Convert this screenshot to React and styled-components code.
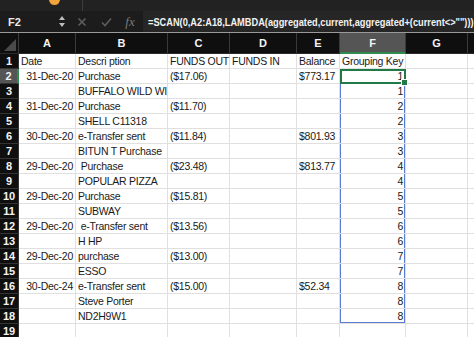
import React from "react";
import styled, { createGlobalStyle } from "styled-components";

const GlobalStyle = createGlobalStyle`
  html, body {
    margin: 0;
    padding: 0;
    background: #1c1c1c;
    overflow: hidden;
  }
`;

const COLS = [57, 92, 62, 67, 43, 66, 62, 40];
const LETTERS = ["A", "B", "C", "D", "E", "F", "G", ""];
const TEMPLATE = `19px ${COLS.map((w) => w + "px").join(" ")}`;

const rows = [
  ["Date", "Descri ption", "FUNDS OUT", "FUNDS IN", "Balance", "Grouping Key", ""],
  ["31-Dec-20", "Purchase", "($17.06)", "", "$773.17", "1"],
  ["", "BUFFALO WILD WI", "", "", "", "1"],
  ["31-Dec-20", "Purchase", "($11.70)", "", "", "2"],
  ["", "SHELL C11318", "", "", "", "2"],
  ["30-Dec-20", "e-Transfer sent", "($11.84)", "", "$801.93", "3"],
  ["", "BITUN T Purchase", "", "", "", "3"],
  ["29-Dec-20", " Purchase", "($23.48)", "", "$813.77", "4"],
  ["", "POPULAR PIZZA", "", "", "", "4"],
  ["29-Dec-20", "Purchase", "($15.81)", "", "", "5"],
  ["", "SUBWAY", "", "", "", "5"],
  ["29-Dec-20", " e-Transfer sent", "($13.56)", "", "", "6"],
  ["", "H HP", "", "", "", "6"],
  ["29-Dec-20", "purchase", "($13.00)", "", "", "7"],
  ["", "ESSO", "", "", "", "7"],
  ["30-Dec-24", "e-Transfer sent", "($15.00)", "", "$52.34", "8"],
  ["", "Steve Porter", "", "", "", "8"],
  ["", "ND2H9W1", "", "", "", "8"],
  ["", "", "", "", "", ""],
];

const Window = styled.div`
  width: 474px;
  height: 337px;
  overflow: hidden;
  background: #ffffff;
  font-family: "Liberation Sans", Arial, sans-serif;
`;

const TitleStrip = styled.div`
  height: 11px;
  background: #222222;
  display: flex;
  align-items: flex-start;
  padding-left: 49px;
  gap: 22px;
`;

const Dot = styled.span`
  width: 11px;
  height: 11px;
  margin-top: -6px;
  border-radius: 50%;
  background: #f0a43a;
`;

const StripDivider = styled.span`
  width: 1px;
  height: 11px;
  background: #3c3c3c;
`;

const FormulaBar = styled.div`
  height: 21px;
  background: #1c1c1c;
  display: flex;
  align-items: center;
  border-bottom: 1px solid #9a9a9a;
`;

const NameBox = styled.div`
  width: 51px;
  padding-left: 8px;
  color: #e8e8e8;
  font-weight: 700;
  font-size: 11px;
`;

const Spinner = styled.div`
  display: flex;
  flex-direction: column;
  align-items: center;
  gap: 3px;
  width: 6px;
  margin-right: 5px;
`;

const Tri = styled.span`
  width: 0;
  height: 0;
  border-left: 3px solid transparent;
  border-right: 3px solid transparent;
  ${({ up }) =>
    up ? "border-bottom: 4px solid #bdbdbd;" : "border-top: 4px solid #bdbdbd;"}
`;

const IconSlot = styled.div`
  width: 24px;
  display: flex;
  justify-content: center;
  align-items: center;
`;

const Fx = styled.span`
  font-family: "Liberation Serif", serif;
  font-style: italic;
  font-size: 13px;
  color: #7a7a7a;
`;

const FormulaInput = styled.div`
  flex: 1;
  height: 21px;
  margin-left: 1px;
  background: #262626;
  display: flex;
  align-items: center;
  padding-left: 5px;
  overflow: hidden;
`;

const FormulaText = styled.span`
  display: inline-block;
  color: #f2f2f2;
  font-weight: 700;
  font-size: 10.5px;
  white-space: nowrap;
  transform: scaleX(0.88);
  transform-origin: left center;
`;

const Sheet = styled.div`
  display: grid;
  grid-template-columns: ${TEMPLATE};
  grid-template-rows: 21px;
  grid-auto-rows: 15px;
`;

const ColHeader = styled.div`
  background: ${({ active }) => (active ? "#555555" : "#0f0f0f")};
  border-right: 1px solid #3a3a3a;
  border-bottom: ${({ active }) => (active ? "2px solid #2f8a50" : "1px solid #2a2a2a")};
  box-sizing: border-box;
  color: #f4f4f4;
  font-weight: 700;
  font-size: 11px;
  display: flex;
  align-items: center;
  justify-content: center;
`;

const Corner = styled(ColHeader)`
  position: relative;
  &::after {
    content: "";
    position: absolute;
    right: 2px;
    bottom: 2px;
    border-left: 12px solid transparent;
    border-bottom: 12px solid #4a4a4a;
  }
`;

const RowHeader = styled.div`
  background: ${({ active }) => (active ? "#555555" : "#0f0f0f")};
  border-bottom: 1px solid #333333;
  border-right: ${({ active }) => (active ? "2px solid #2f8a50" : "1px solid #333")};
  box-sizing: border-box;
  color: #f4f4f4;
  font-weight: 700;
  font-size: 11px;
  display: flex;
  align-items: center;
  justify-content: center;
`;

const Cell = styled.div`
  position: relative;
  box-sizing: border-box;
  border-right: 1px solid #e0e0e0;
  border-bottom: 1px solid #e0e0e0;
  color: #1a1a1a;
  font-size: 10.5px;
  letter-spacing: -0.25px;
  line-height: 14px;
  padding: 0 2px;
  white-space: pre;
  text-align: ${({ align }) => align};
  ${({ range, last }) =>
    range
      ? `box-shadow: inset 1px 0 #5b7bd0, inset -1px 0 #5b7bd0${
          last ? ", inset 0 -1px #5b7bd0" : ""
        };`
      : ""}
  ${({ active }) =>
    active
      ? `border: 2px solid #1f7a45; line-height: 11px; padding: 0 1px; box-shadow: none;`
      : ""}
`;

const Handle = styled.span`
  position: absolute;
  right: -4px;
  bottom: -4px;
  width: 5px;
  height: 5px;
  background: #1f7a45;
  border: 1px solid #ffffff;
  z-index: 2;
`;

const alignFor = (r, c) => {
  if (r === 0) return "left";
  if (c === 0 || c === 5) return "right";
  return "left";
};

const XIcon = () => (
  <svg width="10" height="10" viewBox="0 0 10 10">
    <path d="M1.5 1.5 L8.5 8.5 M8.5 1.5 L1.5 8.5" stroke="#5e5e5e" strokeWidth="1.6" />
  </svg>
);

const CheckIcon = () => (
  <svg width="11" height="10" viewBox="0 0 11 10">
    <path d="M1 5.5 L4 8.5 L10 1.5" stroke="#5e5e5e" strokeWidth="1.6" fill="none" />
  </svg>
);

export default function App() {
  return (
    <Window>
      <GlobalStyle />
      <TitleStrip>
        <Dot />
        <StripDivider />
      </TitleStrip>
      <FormulaBar>
        <NameBox>F2</NameBox>
        <Spinner>
          <Tri up />
          <Tri />
        </Spinner>
        <IconSlot>
          <XIcon />
        </IconSlot>
        <IconSlot>
          <CheckIcon />
        </IconSlot>
        <IconSlot>
          <Fx>fx</Fx>
        </IconSlot>
        <FormulaInput>
          <FormulaText>
            =SCAN(0,A2:A18,LAMBDA(aggregated,current,aggregated+(current&lt;&gt;"")))
          </FormulaText>
        </FormulaInput>
      </FormulaBar>
      <Sheet>
        <Corner />
        {LETTERS.map((l, i) => (
          <ColHeader key={"h" + i} active={l === "F"}>
            {l}
          </ColHeader>
        ))}
        {rows.map((row, r) => (
          <React.Fragment key={"r" + r}>
            <RowHeader active={r === 1}>{r + 1}</RowHeader>
            {COLS.map((_, c) => {
              const value = row[c] || "";
              const isActive = c === 5 && r === 1;
              return (
                <Cell
                  key={"c" + r + "-" + c}
                  align={alignFor(r, c)}
                  range={c === 5 && r >= 1 && r <= 17}
                  last={r === 17}
                  active={isActive}
                >
                  {value}
                  {isActive && <Handle />}
                </Cell>
              );
            })}
          </React.Fragment>
        ))}
      </Sheet>
    </Window>
  );
}
